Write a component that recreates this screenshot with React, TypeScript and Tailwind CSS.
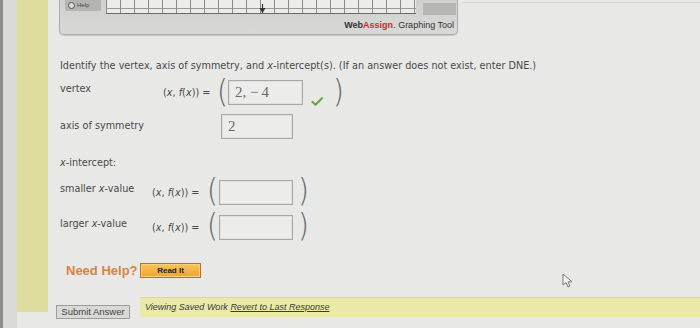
import React from "react";

const body = { fontFamily: '"DejaVu Sans", Verdana, sans-serif' };
const arial = { fontFamily: '"Liberation Sans", Arial, sans-serif' };
const serif = { fontFamily: '"Liberation Serif", "Times New Roman", serif' };

function Paren({ ch }: { ch: string }) {
  return (
    <span
      className="inline-block text-[28px] leading-[28px] text-[#666664] scale-y-[1.15] w-[10px] text-center"
      style={{ ...body, fontWeight: 200 }}
    >
      {ch}
    </span>
  );
}

function Fx() {
  return (
    <span className="text-[9.7px] text-[#4a4a4a] whitespace-nowrap" style={body}>
      (<i>x</i>, <i>f</i>(<i>x</i>)) =
    </span>
  );
}

function Box({ w, children }: { w: number; children?: React.ReactNode }) {
  return (
    <div
      className="h-[25px] border border-[#a8a8a6] bg-[#ececea] shadow-[inset_0_0_0_1px_#e0e0de] flex items-center pl-[6px] text-[15px] text-[#6a6a6a]"
      style={{ width: w, ...serif }}
    >
      {children}
    </div>
  );
}

function Check() {
  return (
    <svg width="12" height="9" viewBox="0 0 12 9" className="mt-[18px]">
      <path d="M1.5 5 L4.5 7.8 L11 1.2" stroke="#6aa84a" strokeWidth="2.2" fill="none" strokeLinecap="round" strokeLinejoin="round" />
    </svg>
  );
}

function Grid() {
  const cells = [];
  for (let i = 0; i <= 22; i++) {
    cells.push(<line key={i} x1={i * 14 + 0.5} y1={0} x2={i * 14 + 0.5} y2={13} stroke="#8a8a8a" strokeWidth="1" />);
  }
  return (
    <svg width="312" height="14" viewBox="0 0 312 14">
      <rect x="0" y="0" width="310" height="13" fill="#ececea" />
      {cells}
      <line x1="0" y1="8.5" x2="310" y2="8.5" stroke="#9a9a9a" strokeWidth="1" />
      <line x1="0" y1="13.5" x2="310" y2="13.5" stroke="#6a6a6a" strokeWidth="1" />
      <line x1="156.5" y1="4" x2="156.5" y2="13" stroke="#333" strokeWidth="1.2" />
      <path d="M153.5 8 L156.5 13 L159.5 8 Z" fill="#333" />
    </svg>
  );
}

export default function App() {
  return (
    <div className="w-[700px] h-[328px] overflow-hidden flex bg-[#e8e8e6] relative" style={body}>
      <div className="w-[3px] bg-[#8c8c8a]" />
      <div className="w-[14px] bg-[#dadad8]" />
      <div className="w-[31px] h-[312px] bg-[#dedd9e]" />
      <div className="flex-1 flex flex-col">
        {/* graph tool panel */}
        <div className="ml-[11px] w-[399px] h-[35px] bg-gradient-to-b from-[#d0d0ce] to-[#d8d8d6] border border-t-0 border-[#aeaeac] rounded-b-[5px] shadow-[0_1px_1px_#c4c4c2] flex flex-col">
          <div className="flex items-start h-[17px]">
            <div className="ml-[5px] w-[36px] h-[11px] bg-[#b4b4b2] rounded-b-[2px] flex items-center gap-[2px] pl-[3px]">
              <span className="w-[7px] h-[7px] rounded-full border border-[#555] bg-[#ddd]" />
              <span className="text-[6px] text-[#444]" style={arial}>Help</span>
            </div>
            <div className="ml-[5px]">
              <Grid />
            </div>
            <div className="ml-[5px] mt-[3px] w-[33px] h-[12px] bg-[#b6b6b4]" />
          </div>
          <div className="flex justify-end pr-[3px] mt-[2px] text-[9px] leading-[12px] text-[#333]" style={arial}>
            <span className="font-bold">Web</span>
            <span className="font-bold text-[#d9262d]">Assign</span>
            <span>.&nbsp;Graphing Tool</span>
          </div>
        </div>

        <div className="pl-[12px] flex flex-col text-[#4a4a4a]">
          <div className="mt-[25px] h-[12px] leading-[12px] text-[9.7px] whitespace-nowrap">
            Identify the vertex, axis of symmetry, and <i>x</i>-intercept(s). (If an answer does not exist, enter DNE.)
          </div>

          {/* vertex */}
          <div className="mt-[5px] h-[31px] flex items-center">
            <span className="w-[103px] text-[9.7px] -mt-[6px]">vertex</span>
            <span className="w-[54px] -mt-[3px]"><Fx /></span>
            <span className="ml-[0px]"><Paren ch="(" /></span>
            <span className="ml-[1px]"><Box w={75}>2,&nbsp;−&thinsp;4</Box></span>
            <span className="ml-[8px]"><Check /></span>
            <span className="ml-[10px]"><Paren ch=")" /></span>
          </div>

          {/* axis */}
          <div className="mt-[6px] h-[25px] flex items-center">
            <span className="w-[161px] text-[9.7px]">axis of symmetry</span>
            <Box w={72}>2</Box>
          </div>

          <div className="mt-[18px] h-[12px] leading-[12px] text-[9.7px]">
            <i>x</i>-intercept:
          </div>

          {/* smaller */}
          <div className="mt-[8px] h-[30px] flex items-center">
            <span className="w-[92px] text-[9.7px] -mt-[5px]">smaller <i>x</i>-value</span>
            <span className="w-[54px] -mt-[3px]"><Fx /></span>
            <span className="ml-[1px]"><Paren ch="(" /></span>
            <span className="ml-[2px]"><Box w={74} /></span>
            <span className="ml-[5px]"><Paren ch=")" /></span>
          </div>

          {/* larger */}
          <div className="mt-[5px] h-[30px] flex items-center">
            <span className="w-[92px] text-[9.7px] -mt-[5px]">larger <i>x</i>-value</span>
            <span className="w-[54px] -mt-[3px]"><Fx /></span>
            <span className="ml-[1px]"><Paren ch="(" /></span>
            <span className="ml-[2px]"><Box w={74} /></span>
            <span className="ml-[5px]"><Paren ch=")" /></span>
          </div>

          {/* need help */}
          <div className="mt-[21px] h-[15px] flex items-center">
            <span className="ml-[6px] w-[67px] text-[13px] font-bold text-[#d8843e] whitespace-nowrap" style={arial}>
              Need Help?
            </span>
            <button
              className="ml-[7px] w-[61px] h-[15px] border border-[#c66a1c] bg-gradient-to-b from-[#f9c55a] to-[#f0a32c] shadow-[inset_0_0_0_1px_#f7d27a] text-[8px] font-bold text-[#222] leading-[13px]"
              style={arial}
            >
              Read It
            </button>
          </div>
        </div>

        {/* bottom */}
        <div className="mt-[19px] flex items-start">
          <button
            className="ml-[8px] mt-[8px] w-[74px] h-[14px] border border-[#9c9c9a] bg-[#d9d9d7] text-[9.5px] leading-[12px] text-[#444]"
            style={arial}
          >
            Submit Answer
          </button>
          <div
            className="ml-[10px] flex-1 h-[20px] bg-[#ebe9aa] border-t border-[#d8d6a0] flex items-center pl-[5px] text-[9px] italic text-[#3a3a3a]"
            style={arial}
          >
            Viewing Saved Work&nbsp;<span className="underline">Revert to Last Response</span>
          </div>
        </div>
      </div>

      {/* top faint line */}
      <div className="absolute left-[462px] right-0 top-[2px] h-px bg-[#d2d2d0]" />

      {/* mouse cursor */}
      <svg className="absolute left-[562px] top-[273px]" width="12" height="16" viewBox="0 0 12 16">
        <path d="M1 1 L1 12 L4 9.5 L6 14 L8 13 L6 8.8 L10 8.8 Z" fill="#f4f4f4" stroke="#777" strokeWidth="1" strokeLinejoin="round" />
      </svg>
    </div>
  );
}
